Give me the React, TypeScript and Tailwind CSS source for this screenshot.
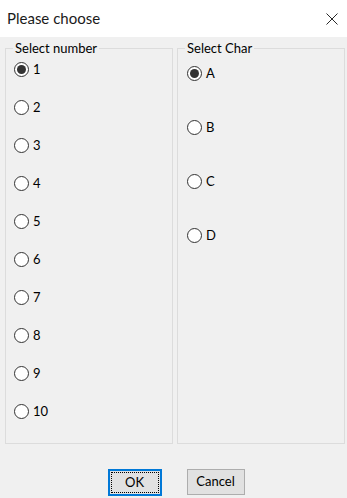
import React from "react";

const numbers = ["1", "2", "3", "4", "5", "6", "7", "8", "9", "10"];
const chars = ["A", "B", "C", "D"];

function Radio({ label, checked }: { label: string; checked?: boolean }) {
  return (
    <label className="flex h-4 items-center text-[13px] text-black">
      <span className="flex h-[15px] w-[15px] items-center justify-center rounded-full border border-[#333333] bg-white">
        {checked && <span className="h-[9px] w-[9px] rounded-full bg-[#333333]" />}
      </span>
      <span className="ml-[4px] leading-4">{label}</span>
    </label>
  );
}

function Group({ title, children }: { title: string; children: React.ReactNode }) {
  return (
    <fieldset className="h-[404px] w-[168px] border border-[#dcdcdc]">
      <legend className="ml-[7px] px-[2px] text-[13px] leading-4 text-black">{title}</legend>
      {children}
    </fieldset>
  );
}

export default function App() {
  return (
    <div
      className="flex h-[498px] w-[347px] flex-col bg-[#f0f0f0]"
      style={{ fontFamily: '"Segoe UI", Lato, "Noto Sans", sans-serif' }}
    >
      <div className="flex h-[37px] items-center justify-between bg-white pl-[7px] pr-[9px]">
        <span className="text-[15px] text-[#1a1a1a]">Please choose</span>
        <svg width="12" height="12" viewBox="0 0 12 12" className="text-[#111111]">
          <path d="M0.5 0.5 L11.5 11.5 M11.5 0.5 L0.5 11.5" stroke="currentColor" strokeWidth="0.9" />
        </svg>
      </div>

      <div className="flex gap-[4px] pl-[5px] pt-[3px]">
        <Group title="Select number">
          <div className="flex flex-col gap-[22px] pl-[8px] pt-[5px]">
            {numbers.map((n, i) => (
              <Radio key={n} label={n} checked={i === 0} />
            ))}
          </div>
        </Group>
        <Group title="Select Char">
          <div className="flex flex-col gap-[38px] pl-[9px] pt-[9px]">
            {chars.map((c, i) => (
              <Radio key={c} label={c} checked={i === 0} />
            ))}
          </div>
        </Group>
      </div>

      <div className="mt-[25px] flex justify-center gap-[25px] pl-[5px]">
        <button className="flex h-[27px] w-[54px] items-center justify-center border-2 border-[#0078d7] bg-[#e1e1e1] p-[1px] text-[13px] text-black">
          <span className="flex h-full w-full items-center justify-center border border-dotted border-black">OK</span>
        </button>
        <button className="flex h-[26px] w-[58px] items-center justify-center border border-[#adadad] bg-[#e1e1e1] text-[13px] text-black">
          Cancel
        </button>
      </div>
    </div>
  );
}
